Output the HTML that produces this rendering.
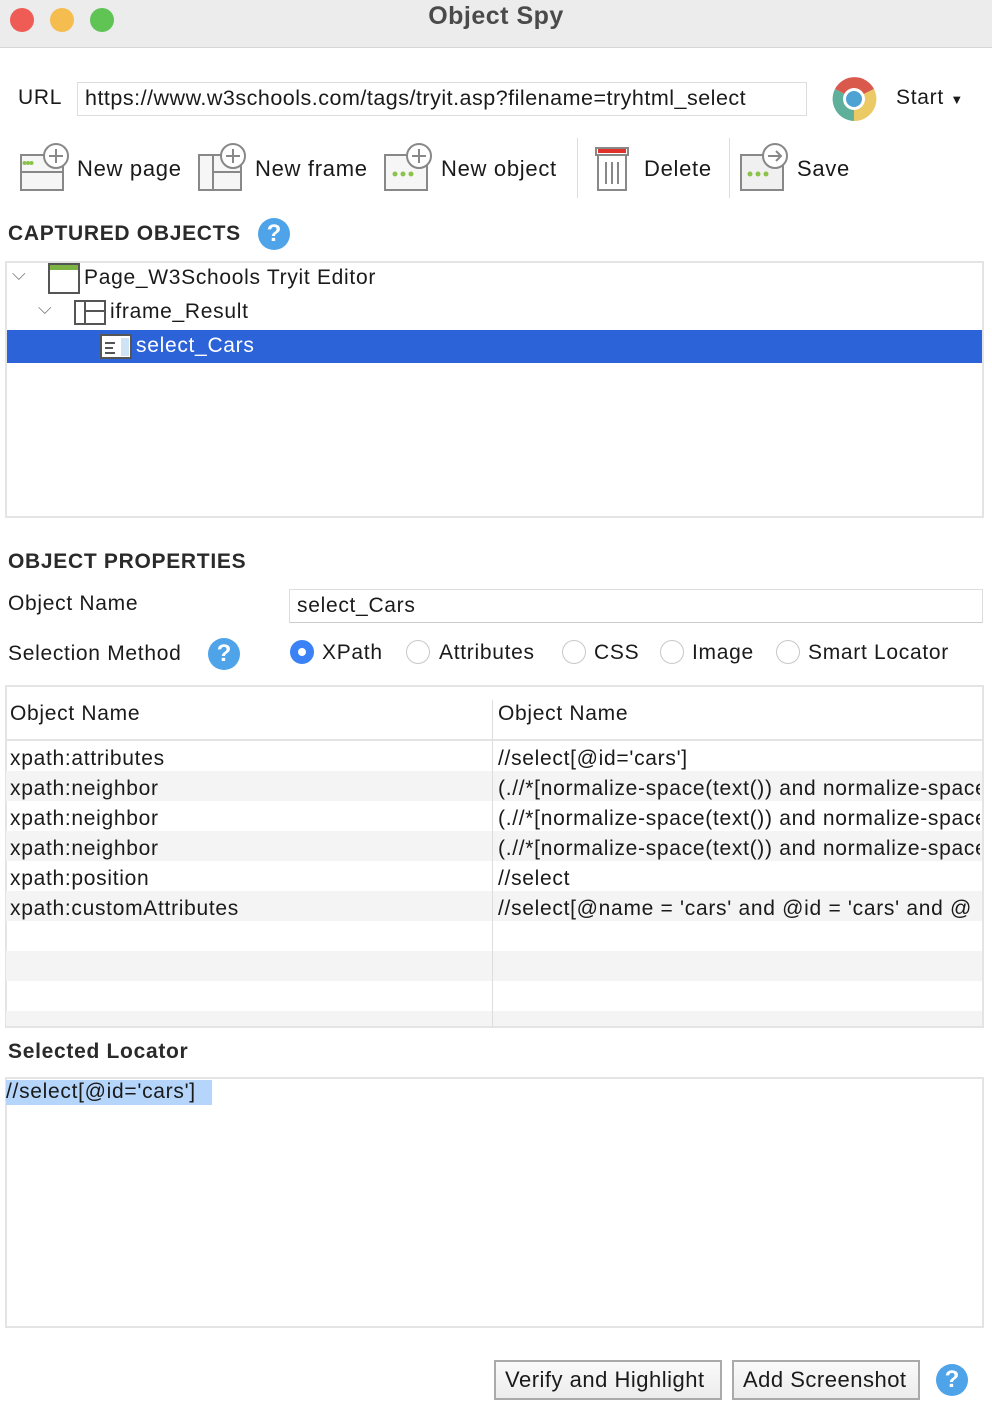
<!DOCTYPE html>
<html><head><meta charset="utf-8"><style>
*{box-sizing:border-box;margin:0;padding:0}
body{width:992px;height:1422px;background:#fff;font-family:"Liberation Sans",sans-serif;color:#1a1a1a;position:relative;overflow:hidden;font-size:21px;letter-spacing:0.7px}
.a{position:absolute;white-space:nowrap}
.title{left:0;top:0;width:992px;height:48px;background:#ececec;border-bottom:1px solid #d6d6d6}
.dot{position:absolute;top:8px;width:24px;height:24px;border-radius:50%}
.h{font-weight:bold;color:#2a2a2a;font-size:21px}
.help{position:absolute;width:32px;height:32px;border-radius:50%;background:#4fa3e8;color:#fff;font-weight:bold;font-size:24px;text-align:center;line-height:32px;letter-spacing:0}
.radio{position:absolute;width:24px;height:24px;border-radius:50%;border:1px solid #c8c8c8;background:#fff}
.row{position:absolute;left:6px;width:976px;height:30px}
.btn{position:absolute;top:1360px;height:40px;border:2px solid #aaa;background:linear-gradient(#fafafa,#ececec);font-size:22px;line-height:36px;padding:0 9px;white-space:nowrap;overflow:hidden;letter-spacing:0.5px}
</style></head><body>
<div class="a title"></div>
<div class="dot" style="left:10px;background:#ee5c55"></div>
<div class="dot" style="left:50px;background:#f5bd4f"></div>
<div class="dot" style="left:90px;background:#5fc454"></div>
<div class="a" style="left:0;width:992px;text-align:center;top:2px;font-weight:bold;font-size:25px;color:#4a4a4a;letter-spacing:0.5px">Object Spy</div>

<div class="a" style="left:18px;top:86px">URL</div>
<div class="a" style="left:77px;top:82px;width:730px;height:34px;border:1px solid #ddd;padding:3px 7px;font-size:21.5px;letter-spacing:0.5px;overflow:hidden">https://www.w3schools.com/tags/tryit.asp?filename=tryhtml_select</div>
<svg class="a" style="left:830px;top:75px" width="48" height="48" viewBox="0 0 48 48">
<path d="M24 24 L5 14 A22 22 0 0 1 44 14 Z" fill="#d9594c"/>
<path d="M24 24 L44 14 A22 22 0 0 1 24 46 Z" fill="#ebc964"/>
<path d="M24 24 L24 46 A22 22 0 0 1 5 14 Z" fill="#5fb09a"/>
<circle cx="24" cy="24" r="11" fill="#fff"/><circle cx="24" cy="24" r="8" fill="#4fa3d2"/></svg>
<div class="a" style="left:896px;top:86px">Start <span style="font-size:13px">▼</span></div>

<svg class="a" style="left:18px;top:142px" width="52" height="52" viewBox="0 0 52 52" fill="none" stroke="#888" stroke-width="2"><rect x="3" y="13" width="42" height="35" fill="#f6f6f6"/><line x1="3" y1="30" x2="45" y2="30"/><circle cx="6.5" cy="21" r="1" stroke="#8bc34a"/><circle cx="10" cy="21" r="1" stroke="#8bc34a"/><circle cx="13.5" cy="21" r="1" stroke="#8bc34a"/><circle cx="38" cy="14" r="12" fill="#fff"/><path d="M38 7v14M31 14h14"/></svg>
<div class="a" style="left:77px;top:156px;font-size:22px">New page</div>
<svg class="a" style="left:196px;top:142px" width="52" height="52" viewBox="0 0 52 52" fill="none" stroke="#888" stroke-width="2"><rect x="3" y="13" width="42" height="35" fill="#f6f6f6"/><line x1="17" y1="13" x2="17" y2="48"/><line x1="17" y1="30" x2="45" y2="30"/><circle cx="37" cy="14" r="12" fill="#fff"/><path d="M37 7v14M30 14h14"/></svg>
<div class="a" style="left:255px;top:156px;font-size:22px">New frame</div>
<svg class="a" style="left:382px;top:142px" width="52" height="52" viewBox="0 0 52 52" fill="none" stroke="#888" stroke-width="2"><rect x="3" y="13" width="42" height="35" fill="#f6f6f6"/><circle cx="13" cy="32" r="2.5" fill="#8bc34a" stroke="none"/><circle cx="21" cy="32" r="2.5" fill="#8bc34a" stroke="none"/><circle cx="29" cy="32" r="2.5" fill="#8bc34a" stroke="none"/><circle cx="37" cy="14" r="12" fill="#fff"/><path d="M37 7v14M30 14h14"/></svg>
<div class="a" style="left:441px;top:156px;font-size:22px">New object</div>
<div class="a" style="left:577px;top:138px;width:1px;height:60px;background:#ddd"></div>
<svg class="a" style="left:594px;top:144px" width="36" height="50" viewBox="0 0 36 50" fill="none" stroke="#888" stroke-width="2"><rect x="2" y="4" width="32" height="7" fill="#fff"/><rect x="4" y="5" width="28" height="4" fill="#e0312b" stroke="none"/><path d="M4 12v34h28V12"/><path d="M12 18v22M18 18v22M24 18v22"/></svg>
<div class="a" style="left:644px;top:156px;font-size:22px">Delete</div>
<div class="a" style="left:729px;top:138px;width:1px;height:60px;background:#ddd"></div>
<svg class="a" style="left:738px;top:142px" width="52" height="52" viewBox="0 0 52 52" fill="none" stroke="#888" stroke-width="2"><rect x="3" y="13" width="42" height="35" fill="#f0f0f0"/><circle cx="12" cy="32" r="2.5" fill="#8bc34a" stroke="none"/><circle cx="20" cy="32" r="2.5" fill="#8bc34a" stroke="none"/><circle cx="28" cy="32" r="2.5" fill="#8bc34a" stroke="none"/><circle cx="37" cy="14" r="12" fill="#fff"/><path d="M30 14h13M38 9l5 5-5 5"/></svg>
<div class="a" style="left:797px;top:156px;font-size:22px">Save</div>

<div class="a h" style="left:8px;top:222px">CAPTURED OBJECTS</div>
<div class="help" style="left:258px;top:218px">?</div>

<div class="a" style="left:5px;top:261px;width:979px;height:257px;border:2px solid #e4e4e4"></div>
<div class="a" style="left:12px;top:264px;color:#777;font-size:18px">⌵</div>
<svg class="a" style="left:48px;top:263px" width="32" height="32"><rect x="1" y="1" width="30" height="29" fill="#fff" stroke="#555" stroke-width="2"/><rect x="2" y="2" width="28" height="5" fill="#7cb342"/></svg>
<div class="a" style="left:84px;top:266px">Page_W3Schools Tryit Editor</div>
<div class="a" style="left:38px;top:298px;color:#777;font-size:18px">⌵</div>
<svg class="a" style="left:74px;top:300px" width="32" height="26"><rect x="1" y="1" width="30" height="23" fill="#fff" stroke="#555" stroke-width="2"/><line x1="11" y1="1" x2="11" y2="24" stroke="#555" stroke-width="2"/><line x1="11" y1="11" x2="31" y2="11" stroke="#555" stroke-width="2"/></svg>
<div class="a" style="left:110px;top:300px">iframe_Result</div>
<div class="a" style="left:7px;top:330px;width:975px;height:33px;background:#2c63d8"></div>
<svg class="a" style="left:100px;top:334px" width="32" height="26"><rect x="1" y="1" width="30" height="23" fill="#fff" stroke="#555" stroke-width="2"/><path d="M5 9h10M5 14h8M5 19h10" stroke="#555" stroke-width="2"/><rect x="21" y="4" width="8" height="18" fill="#cfe3f7"/></svg>
<div class="a" style="left:136px;top:334px;color:#fff">select_Cars</div>

<div class="a h" style="left:8px;top:550px">OBJECT PROPERTIES</div>
<div class="a" style="left:8px;top:592px">Object Name</div>
<div class="a" style="left:289px;top:589px;width:694px;height:34px;border:1px solid #ddd;border-bottom-color:#ccc;padding:4px 7px">select_Cars</div>
<div class="a" style="left:8px;top:642px">Selection Method</div>
<div class="help" style="left:208px;top:638px">?</div>
<div class="radio" style="left:290px;top:640px;background:#3b82f6;border-color:#3b82f6"><div style="position:absolute;left:7px;top:7px;width:8px;height:8px;border-radius:50%;background:#fff"></div></div>
<div class="a" style="left:322px;top:641px">XPath</div>
<div class="radio" style="left:406px;top:640px"></div><div class="a" style="left:439px;top:641px">Attributes</div>
<div class="radio" style="left:562px;top:640px"></div><div class="a" style="left:594px;top:641px">CSS</div>
<div class="radio" style="left:660px;top:640px"></div><div class="a" style="left:692px;top:641px">Image</div>
<div class="radio" style="left:776px;top:640px"></div><div class="a" style="left:808px;top:641px">Smart Locator</div>

<div class="a" style="left:5px;top:685px;width:979px;height:343px;border:2px solid #e4e4e4"></div>
<div class="a" style="left:7px;top:739px;width:975px;height:2px;background:#e4e4e4"></div>
<div class="a" style="left:492px;top:700px;width:1px;height:326px;background:#ddd"></div>
<div class="a" style="left:10px;top:702px">Object Name</div>
<div class="a" style="left:498px;top:702px">Object Name</div>
<div class="row" style="top:771px;background:#f4f4f4"></div>
<div class="row" style="top:831px;background:#f4f4f4"></div>
<div class="row" style="top:891px;background:#f4f4f4"></div>
<div class="row" style="top:951px;background:#f4f4f4"></div>
<div class="row" style="top:1011px;height:15px;background:#f4f4f4"></div>
<div class="a" style="left:492px;top:741px;width:1px;height:285px;background:#ddd"></div>
<div class="a" style="left:10px;top:744px;line-height:30px">xpath:attributes<br>xpath:neighbor<br>xpath:neighbor<br>xpath:neighbor<br>xpath:position<br>xpath:customAttributes</div>
<div class="a" style="left:498px;top:744px;line-height:30px;width:482px;overflow:hidden">//select[@id='cars']<br>(.//*[normalize-space(text()) and normalize-space<br>(.//*[normalize-space(text()) and normalize-space<br>(.//*[normalize-space(text()) and normalize-space<br>//select<br>//select[@name = 'cars' and @id = 'cars' and @</div>

<div class="a h" style="left:8px;top:1040px">Selected Locator</div>
<div class="a" style="left:5px;top:1077px;width:979px;height:251px;border:2px solid #e4e4e4"></div>
<div class="a" style="left:6px;top:1080px;width:206px;height:25px;background:#b5d5fb"></div>
<div class="a" style="left:6px;top:1080px">//select[@id='cars']</div>

<div class="btn" style="left:494px;width:228px">Verify and Highlight</div>
<div class="btn" style="left:732px;width:188px">Add Screenshot</div>
<div class="help" style="left:936px;top:1364px">?</div>
</body></html>
